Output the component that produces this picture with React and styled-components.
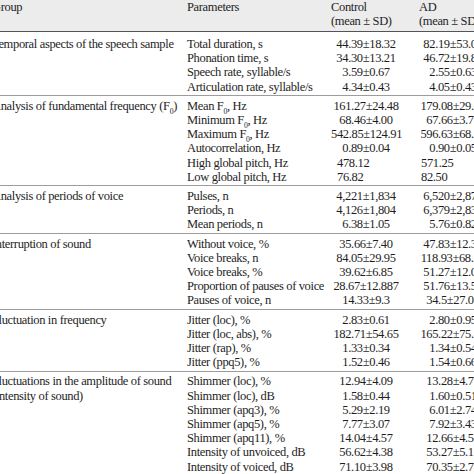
import styled, { createGlobalStyle } from 'styled-components';

const Global = createGlobalStyle`
    html, body {
        margin: 0;
        padding: 0;
        background: #fff;
        overflow: hidden;
    }
    body {
        font-family: "Liberation Serif", "DejaVu Serif", serif;
        color: #1e1e1e;
    }
`;

const Table = styled.div`
    width: 560px;
    margin-left: -8px;
    font-size: 12.5px;
    letter-spacing: -0.35px;
    line-height: 14.2px;
`;

const Head = styled.div`
    display: grid;
    grid-template-columns: 195px 144px 88px 1fr;
    background: #ececec;
    padding: 0 0 3px;
    border-bottom: 1.5px solid #555;
`;

const HeadCell = styled.div`
    white-space: nowrap;
`;

const Body = styled.div`
    padding-top: 2px;
`;

const Group = styled.div`
    display: grid;
    grid-template-columns: 195px 1fr;
    padding: 2.5px 0 1.5px;
    border-bottom: 1px solid #9c9c9c;
`;

const GroupName = styled.div`
    padding-right: 4px;
`;

const Row = styled.div`
    display: grid;
    grid-template-columns: 144px 88px 100px;
    white-space: nowrap;
`;

const Param = styled.div``;

const Value = styled.div`
    text-align: ${p => (p.$left ? 'left' : 'center')};
    padding-left: ${p => (p.$left ? p.$left : 0)}px;
    padding-right: ${p => (p.$left ? 0 : p.$pr)}px;
`;

const Sub = styled.sub`
    font-size: 0.62em;
    line-height: 0;
`;

const F0 = () => <>F<Sub>0</Sub></>;

const groups = [
    {
        name: 'Temporal aspects of the speech sample',
        rows: [
            ['Total duration, s', '44.39±18.32', '82.19±53.06'],
            ['Phonation time, s', '34.30±13.21', '46.72±19.86'],
            ['Speech rate, syllable/s', '3.59±0.67', '2.55±0.63'],
            ['Articulation rate, syllable/s', '4.34±0.43', '4.05±0.43'],
        ],
    },
    {
        name: <>Analysis of fundamental frequency (<F0 />)</>,
        rows: [
            [<>Mean <F0 />, Hz</>, '161.27±24.48', '179.08±29.06'],
            [<>Minimum <F0 />, Hz</>, '68.46±4.00', '67.66±3.75'],
            [<>Maximum <F0 />, Hz</>, '542.85±124.91', '596.63±68.71'],
            ['Autocorrelation, Hz', '0.89±0.04', '0.90±0.05'],
            ['High global pitch, Hz', '478.12', '571.25', true],
            ['Low global pitch, Hz', '76.82', '82.50', true],
        ],
    },
    {
        name: 'Analysis of periods of voice',
        rows: [
            ['Pulses, n', '4,221±1,834', '6,520±2,871'],
            ['Periods, n', '4,126±1,804', '6,379±2,832'],
            ['Mean periods, n', '6.38±1.05', '5.76±0.82'],
        ],
    },
    {
        name: 'Interruption of sound',
        rows: [
            ['Without voice, %', '35.66±7.40', '47.83±12.31'],
            ['Voice breaks, n', '84.05±29.95', '118.93±68.32'],
            ['Voice breaks, %', '39.62±6.85', '51.27±12.06'],
            ['Proportion of pauses of voice', '28.67±12.887', '51.76±13.56'],
            ['Pauses of voice, n', '14.33±9.3', '34.5±27.06'],
        ],
    },
    {
        name: 'Fluctuation in frequency',
        rows: [
            ['Jitter (loc), %', '2.83±0.61', '2.80±0.95'],
            ['Jitter (loc, abs), %', '182.71±54.65', '165.22±75.44'],
            ['Jitter (rap), %', '1.33±0.34', '1.34±0.54'],
            ['Jitter (ppq5), %', '1.52±0.46', '1.54±0.66'],
        ],
    },
    {
        name: 'Fluctuations in the amplitude of sound (intensity of sound)',
        rows: [
            ['Shimmer (loc), %', '12.94±4.09', '13.28±4.71'],
            ['Shimmer (loc), dB', '1.58±0.44', '1.60±0.51'],
            ['Shimmer (apq3), %', '5.29±2.19', '6.01±2.74'],
            ['Shimmer (apq5), %', '7.77±3.07', '7.92±3.43'],
            ['Shimmer (apq11), %', '14.04±4.57', '12.66±4.58'],
            ['Intensity of unvoiced, dB', '56.62±4.38', '53.27±5.15'],
            ['Intensity of voiced, dB', '71.10±3.98', '70.35±2.74'],
        ],
    },
];

export default function App() {
    return (
        <>
            <Global />
            <Table>
                <Head>
                    <HeadCell>Group</HeadCell>
                    <HeadCell>Parameters</HeadCell>
                    <HeadCell>Control<br />(mean ± SD)</HeadCell>
                    <HeadCell>AD<br />(mean ± SD)</HeadCell>
                </Head>
                <Body>
                    {groups.map((g, i) => (
                        <Group key={i}>
                            <GroupName>{g.name}</GroupName>
                            <div>
                                {g.rows.map(([param, ctrl, ad, plain], j) => (
                                    <Row key={j}>
                                        <Param>{param}</Param>
                                        <Value $left={plain ? 6 : 0} $pr={18}>{ctrl}</Value>
                                        <Value $left={plain ? 2 : 0} $pr={32}>{ad}</Value>
                                    </Row>
                                ))}
                            </div>
                        </Group>
                    ))}
                </Body>
            </Table>
        </>
    );
}
